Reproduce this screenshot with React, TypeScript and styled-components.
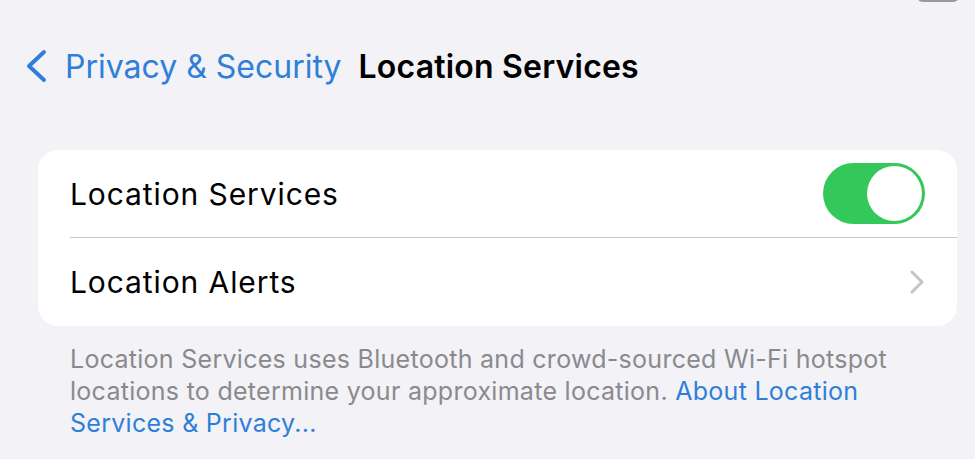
import React from 'react'
import styled, { createGlobalStyle } from 'styled-components'

const GlobalStyle = createGlobalStyle`
  html, body {
    margin: 0;
    padding: 0;
    background: #f2f2f7;
  }
  body {
    font-family: Inter, "Noto Sans", "Liberation Sans", sans-serif;
    -webkit-font-smoothing: antialiased;
  }
`

const Screen = styled.div`
  width: 975px;
  height: 459px;
  overflow: hidden;
  position: relative;
  background: #f2f2f7;
`

const StatusBattery = styled.div`
  position: absolute;
  top: -30px;
  right: 15px;
  width: 44px;
  height: 32px;
  border: 2px solid #9a9a9e;
  border-radius: 7px;
  box-sizing: border-box;
`

const NavBar = styled.div`
  display: flex;
  align-items: center;
  height: 34px;
  padding: 49px 0 0 24px;
`

const BackButton = styled.div`
  display: flex;
  align-items: center;
  gap: 17px;
  color: #2f7fd9;
  font-size: 32px;
  letter-spacing: 0;
`

const NavTitle = styled.div`
  margin-left: 17px;
  font-size: 32px;
  font-weight: 600;
  color: #000;
  letter-spacing: 0.2px;
`

const Card = styled.div`
  margin: 67px 18px 0 38px;
  background: #fff;
  border-radius: 20px;
  overflow: hidden;
`

const Row = styled.div<{ $divider?: boolean }>`
  display: flex;
  align-items: center;
  justify-content: space-between;
  height: 88px;
  margin-left: 32px;
  padding-right: 32px;
  border-bottom: ${p => (p.$divider ? '1.5px solid #c6c6c8' : 'none')};
  box-sizing: border-box;
`

const RowLabel = styled.div`
  font-size: 30px;
  color: #000;
  letter-spacing: 0.9px;
`

const Toggle = styled.div<{ $on: boolean }>`
  width: 102px;
  height: 61px;
  border-radius: 31px;
  background: ${p => (p.$on ? '#34c759' : '#e9e9eb')};
  display: flex;
  align-items: center;
  justify-content: ${p => (p.$on ? 'flex-end' : 'flex-start')};
  padding: 3px;
  box-sizing: border-box;
`

const Knob = styled.div`
  width: 55px;
  height: 55px;
  border-radius: 50%;
  background: #fff;
`

const Footer = styled.p`
  margin: 17px 0 0 70px;
  width: 850px;
  font-size: 25px;
  line-height: 32px;
  color: #8a8a8e;
  letter-spacing: 0.28px;
`

const Link = styled.span`
  color: #2f7fd9;
`

const ChevronLeft = () => (
  <svg width="24" height="34" viewBox="0 0 24 34">
    <path d="M20 3 L5 17 L20 31" fill="none" stroke="#2f7fd9" strokeWidth="4" strokeLinecap="round" strokeLinejoin="round" />
  </svg>
)

const ChevronRight = () => (
  <svg width="16" height="26" viewBox="0 0 16 26">
    <path d="M3 3 L13 13 L3 23" fill="none" stroke="#c4c4c7" strokeWidth="3" strokeLinecap="round" strokeLinejoin="round" />
  </svg>
)

export default function App() {
  return (
    <Screen>
      <GlobalStyle />
      <StatusBattery />
      <NavBar>
        <BackButton>
          <ChevronLeft />
          Privacy &amp; Security
        </BackButton>
        <NavTitle>Location Services</NavTitle>
      </NavBar>
      <Card>
        <Row $divider>
          <RowLabel>Location Services</RowLabel>
          <Toggle $on>
            <Knob />
          </Toggle>
        </Row>
        <Row>
          <RowLabel>Location Alerts</RowLabel>
          <ChevronRight />
        </Row>
      </Card>
      <Footer>
        Location Services uses Bluetooth and crowd-sourced Wi-Fi hotspot locations to determine your approximate
        location. <Link>About Location Services &amp; Privacy...</Link>
      </Footer>
    </Screen>
  )
}
